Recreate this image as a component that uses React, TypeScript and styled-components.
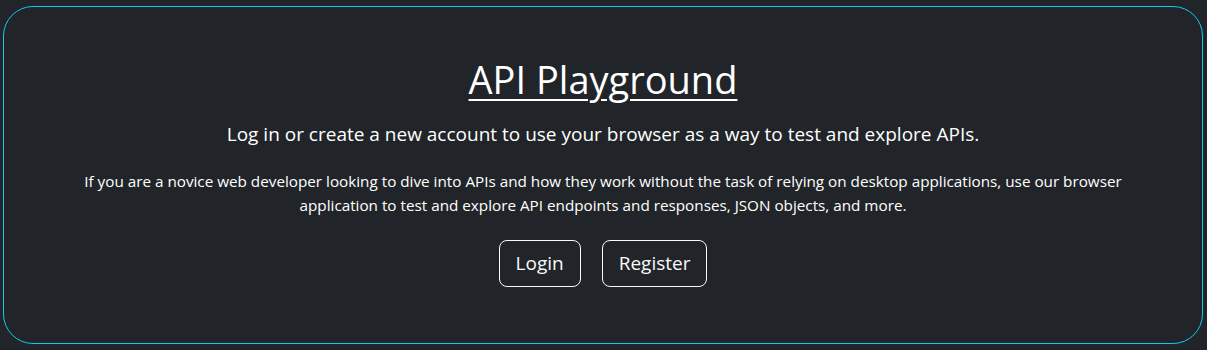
import React from "react";
import styled, { createGlobalStyle } from "styled-components";

const GlobalStyle = createGlobalStyle`
  html, body {
    margin: 0;
    padding: 0;
    background-color: #212529;
  }
  body {
    font-family: "Open Sans", "Noto Sans", sans-serif;
    color: #ffffff;
  }
`;

const Page = styled.div`
  padding: 6px 4px 6px 3px;
  box-sizing: border-box;
  height: 350px;
`;

const Hero = styled.section`
  box-sizing: border-box;
  height: 338px;
  border: 1px solid #0dcaf0;
  border-radius: 30px;
  padding: 48px 24px 0;
  display: flex;
  flex-direction: column;
  align-items: center;
  text-align: center;
`;

const Title = styled.h1`
  margin: 0 0 16px;
  font-size: 38px;
  font-weight: 400;
  line-height: 48px;
  text-decoration: underline;
  text-decoration-thickness: 2px;
  text-underline-offset: 5px;
`;

const Lead = styled.p`
  margin: 0 0 20px;
  font-size: 19px;
  line-height: 30px;
`;

const Description = styled.p`
  margin: 0 0 23px;
  max-width: 1070px;
  font-size: 15.25px;
  line-height: 24px;
`;

const Actions = styled.div`
  display: flex;
  gap: 21px;
  justify-content: center;
`;

const OutlineButton = styled.button`
  font-family: inherit;
  font-size: 19px;
  line-height: 29px;
  padding: 8px 16px;
  color: #f8f9fa;
  background: transparent;
  border: 1px solid #f8f9fa;
  border-radius: 8px;
  cursor: pointer;
`;

export default function App() {
  return (
    <>
      <GlobalStyle />
      <Page>
        <Hero>
          <Title>API Playground</Title>
          <Lead>
            Log in or create a new account to use your browser as a way to test
            and explore APIs.
          </Lead>
          <Description>
            If you are a novice web developer looking to dive into APIs and how
            they work without the task of relying on desktop applications, use
            our browser application to test and explore API endpoints and
            responses, JSON objects, and more.
          </Description>
          <Actions>
            <OutlineButton>Login</OutlineButton>
            <OutlineButton>Register</OutlineButton>
          </Actions>
        </Hero>
      </Page>
    </>
  );
}
